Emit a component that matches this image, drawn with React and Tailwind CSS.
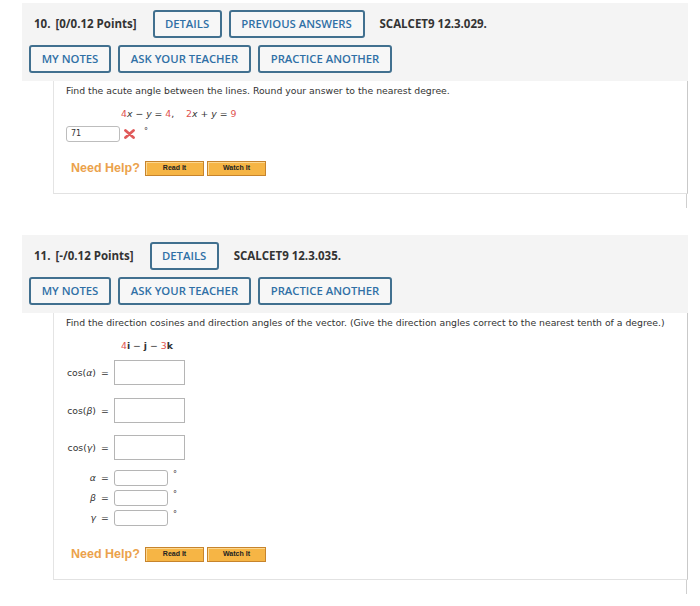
import React from "react";

function HBtn({ w, children }) {
  return (
    <div
      className={`flex h-[28px] items-center justify-center rounded-[3px] border-2 border-[#41708f] bg-[#f7f7f7] text-[11.3px] font-semibold text-[#3070a6] ${w}`}
    >
      {children}
    </div>
  );
}

function Header({ num, points, extra, code }) {
  return (
    <div className="bg-[#f4f4f4] pb-[8px] pl-[7px] pt-[7px] font-['Open_Sans',sans-serif]">
      <div className="flex items-center">
        <div className="ml-[5px] mr-[16px] flex text-[11.5px] font-bold text-[#333]">
          <span>{num}</span>
          <span className="ml-[5px]">{points}</span>
        </div>
        {extra}
        <div className="ml-[15px] text-[11.5px] font-bold text-[#333]">{code}</div>
      </div>
      <div className="mt-[7px] flex gap-[7px]">
        <HBtn w="w-[82px] h-[27px]">MY NOTES</HBtn>
        <HBtn w="w-[133px] h-[27px]">ASK YOUR TEACHER</HBtn>
        <HBtn w="w-[134px] h-[27px]">PRACTICE ANOTHER</HBtn>
      </div>
    </div>
  );
}

function HelpRow({ className }) {
  return (
    <div className={`flex h-[16px] items-center ${className}`}>
      <div className="ml-[5px] w-[74px] font-['Liberation_Sans',Arial,sans-serif] text-[12.5px] font-bold text-[#eba24b]">
        Need Help?
      </div>
      <div className="flex h-[15px] w-[59px] items-center justify-center border border-[#c7842c] bg-[#f6b545] font-['Liberation_Sans',Arial,sans-serif] text-[7px] font-bold text-[#222] shadow-[inset_1px_1px_0_#fcd790]">
        Read It
      </div>
      <div className="ml-[3px] flex h-[15px] w-[59px] items-center justify-center border border-[#c7842c] bg-[#f6b545] font-['Liberation_Sans',Arial,sans-serif] text-[7px] font-bold text-[#222] shadow-[inset_1px_1px_0_#fcd790]">
        Watch It
      </div>
    </div>
  );
}

function Tail() {
  return (
    <div className="flex justify-end">
      <div className="mr-[1px] h-[14px] w-px bg-[#cfcfcf]" />
    </div>
  );
}

function CosRow({ label, className }) {
  return (
    <div className={`flex items-center ${className}`}>
      <div className="flex w-[48px] justify-end whitespace-nowrap">
        <span>{label}</span>
        <span className="w-[18px] text-center">=</span>
      </div>
      <div className="h-[25px] w-[71px] border border-[#b5b5b5] bg-white" />
    </div>
  );
}

function AngRow({ label, className }) {
  return (
    <div className={`flex items-center ${className}`}>
      <div className="flex w-[48px] justify-end">
        <span className="italic">{label}</span>
        <span className="w-[18px] text-center">=</span>
      </div>
      <div className="h-[16px] w-[54px] rounded-[3px] border border-[#b5b5b5] bg-white" />
      <span className="ml-[5px] -mt-[6px] text-[8px]">°</span>
    </div>
  );
}

const R = "text-[#e0524f]";

export default function App() {
  return (
    <div className="h-[606px] w-[700px] overflow-hidden bg-white">
      {/* Question 10 */}
      <div className="ml-[22px] w-[666px] pt-[3px]">
        <Header
          num="10."
          points="[0/0.12 Points]"
          code="SCALCET9 12.3.029."
          extra={
            <div className="flex gap-[7px]">
              <HBtn w="w-[69px]">DETAILS</HBtn>
              <HBtn w="w-[136px]">PREVIOUS ANSWERS</HBtn>
            </div>
          }
        />
        <div className="ml-[31px] h-[113px] border-b border-l border-r border-b-[#e2e2e2] border-l-[#e4e4e4] border-r-[#c9c9c9] bg-white pl-[12px] pt-[4px] font-['DejaVu_Sans',Verdana,sans-serif] text-[9.3px] text-[#333]">
          <div className="h-[12px] whitespace-nowrap leading-[12px]">
            Find the acute angle between the lines. Round your answer to the nearest degree.
          </div>
          <div className="mt-[11px] h-[12px] whitespace-nowrap pl-[55px] leading-[12px]">
            <span className={R}>4</span>
            <i>x</i> − <i>y</i> = <span className={R}>4</span>,&nbsp;&nbsp;&nbsp;&nbsp;
            <span className={R}>2</span>
            <i>x</i> + <i>y</i> = <span className={R}>9</span>
          </div>
          <div className="mt-[6px] flex h-[16px] items-center">
            <div className="flex h-[16px] w-[54px] items-center rounded-[3px] border border-[#bdbdbd] pl-[4px] text-[8px]">
              71
            </div>
            <svg className="ml-[4px]" width="11" height="10" viewBox="0 0 11 10">
              <path d="M1.5 1.5 L9.5 8.5 M9.5 1.5 L1.5 8.5" stroke="#e05a5a" strokeWidth="2.8" strokeLinecap="round" />
            </svg>
            <span className="ml-[9px] -mt-[4px] text-[8px]">°</span>
          </div>
          <HelpRow className="mt-[18px]" />
        </div>
        <Tail />
      </div>

      {/* Question 11 */}
      <div className="ml-[22px] mt-[27px] w-[666px]">
        <Header
          num="11."
          points="[-/0.12 Points]"
          code="SCALCET9 12.3.035."
          extra={<HBtn w="w-[69px]">DETAILS</HBtn>}
        />
        <div className="ml-[31px] h-[267px] border-b border-l border-r border-b-[#e2e2e2] border-l-[#e4e4e4] border-r-[#c9c9c9] bg-white pl-[12px] pt-[4px] font-['DejaVu_Sans',Verdana,sans-serif] text-[9.3px] text-[#333]">
          <div className="h-[12px] whitespace-nowrap leading-[12px]">
            Find the direction cosines and direction angles of the vector. (Give the direction angles correct to the nearest tenth of a degree.)
          </div>
          <div className="mt-[11px] h-[12px] whitespace-nowrap pl-[55px] leading-[12px]">
            <span className={R}>4</span>
            <b>i</b> − <b>j</b> − <span className={R}>3</span>
            <b>k</b>
          </div>
          <CosRow label={<>cos(<i>α</i>)</>} className="mt-[8px]" />
          <CosRow label={<>cos(<i>β</i>)</>} className="mt-[13px]" />
          <CosRow label={<>cos(<i>γ</i>)</>} className="mt-[12px]" />
          <AngRow label="α" className="mt-[10px]" />
          <AngRow label="β" className="mt-[4px]" />
          <AngRow label="γ" className="mt-[4px]" />
          <HelpRow className="mt-[20px]" />
        </div>
        <Tail />
      </div>
    </div>
  );
}
